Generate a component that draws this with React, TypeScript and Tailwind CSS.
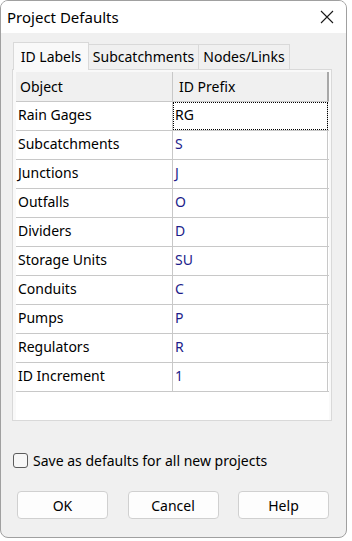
import React from 'react';

const rows: { name: string; prefix: string }[] = [
    { name: 'Rain Gages', prefix: 'RG' },
    { name: 'Subcatchments', prefix: 'S' },
    { name: 'Junctions', prefix: 'J' },
    { name: 'Outfalls', prefix: 'O' },
    { name: 'Dividers', prefix: 'D' },
    { name: 'Storage Units', prefix: 'SU' },
    { name: 'Conduits', prefix: 'C' },
    { name: 'Pumps', prefix: 'P' },
    { name: 'Regulators', prefix: 'R' },
    { name: 'ID Increment', prefix: '1' },
];

const Tab: React.FC<{ label: string; active?: boolean; width: string }> = ({ label, active = false, width }) => (
    <div
        className={`flex items-center justify-center border border-[#d9d9d9] border-b-0 ${width} ${
            active ? 'h-[28px] bg-[#f9f9f9] -mb-px z-10 relative' : 'h-[25px] bg-[#f0f0f0] -ml-px'
        }`}
    >
        <span className="text-[14px] text-black leading-none">{label}</span>
    </div>
);

const Button: React.FC<{ label: string }> = ({ label }) => (
    <button className="w-[91px] h-[28px] bg-[#fdfdfd] border border-[#d0d0d0] rounded-[4px] text-[14px] text-black">
        {label}
    </button>
);

export default function App() {
    return (
        <div className="w-[352px] h-[541px] bg-white" style={{ fontFamily: '"Noto Sans", "Open Sans", sans-serif' }}>
            <div className="w-[347px] h-[538px] border border-[#a0a0a0] rounded-[8px] overflow-hidden flex flex-col bg-[#f0f0f0]">
                {/* Title bar */}
                <div className="h-[32px] bg-white flex items-center justify-between pl-[6px] pr-[10px] shrink-0">
                    <span className="text-[15px] text-black">Project Defaults</span>
                    <svg width="14" height="14" viewBox="0 0 14 14" className="mr-[2px]">
                        <path d="M1 1L13 13M13 1L1 13" stroke="#1a1a1a" strokeWidth="1.1" fill="none" />
                    </svg>
                </div>

                {/* Body */}
                <div className="flex flex-col px-[11px] pt-[9px]">
                    <div className="flex items-end pl-px">
                        <Tab label="ID Labels" active width="w-[76px]" />
                        <Tab label="Subcatchments" width="w-[111px]" />
                        <Tab label="Nodes/Links" width="w-[92px]" />
                    </div>

                    <div className="w-[320px] h-[352px] border border-[#d9d9d9] bg-[#f9f9f9] pl-[3px] pt-[2px]">
                        <div className="w-[313px] h-[348px] bg-white text-[14px] leading-none">
                            <div className="flex h-[30px] bg-[#f0f0f0] border-b border-[#c8c8c8]">
                                <div className="w-[157px] border-r border-[#c8c8c8] flex items-center pl-[4px]">Object</div>
                                <div className="w-[156px] border-r-2 border-[#a8a8a8] flex items-center pl-[6px]">ID Prefix</div>
                            </div>
                            {rows.map((r, i) => (
                                <div key={r.name} className="flex h-[29px] border-b border-[#c8c8c8]">
                                    <div className="w-[157px] border-r border-[#c8c8c8] flex items-center pl-[2px] pb-[2px] text-black">
                                        {r.name}
                                    </div>
                                    <div
                                        className={`w-[155px] flex items-center pl-[2px] pb-[2px] border-r border-[#c8c8c8] ${
                                            i === 0 ? 'outline-1 outline-dotted outline-black -outline-offset-1 text-black' : 'text-[#1c1c8a]'
                                        }`}
                                    >
                                        {r.prefix}
                                    </div>
                                </div>
                            ))}
                        </div>
                    </div>

                    <label className="flex items-center mt-[29px] ml-px gap-[5px]">
                        <span className="w-[15px] h-[15px] border border-[#5c5c5c] rounded-[3px] bg-[#f7f7f7]" />
                        <span className="text-[14px] text-black">Save as defaults for all new projects</span>
                    </label>

                    <div className="flex justify-between mt-[20px] px-[5px] w-[322px]">
                        <Button label="OK" />
                        <Button label="Cancel" />
                        <Button label="Help" />
                    </div>
                </div>
            </div>
        </div>
    );
}
